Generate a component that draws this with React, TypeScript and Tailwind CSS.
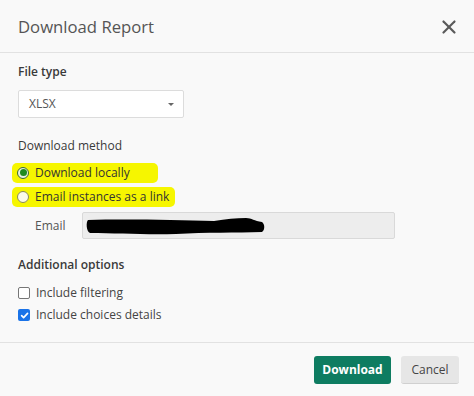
import { X } from 'lucide-react';

const font = { fontFamily: '"Open Sans", "Noto Sans", sans-serif' };

function Radio({ checked }: { checked?: boolean }) {
  return (
    <span className={`w-[12px] h-[12px] rounded-full border flex items-center justify-center shrink-0 ${checked ? 'border-[#3b6b2f] bg-[#e8f0e0]' : 'border-[#8a8a5a] bg-[#fbfbe8]'}`}>
      {checked && <span className="w-[7px] h-[7px] rounded-full bg-[#1f8a1f]" />}
    </span>
  );
}

function Checkbox({ checked }: { checked?: boolean }) {
  return checked ? (
    <span className="w-[12px] h-[12px] rounded-[2px] bg-[#1a73e8] flex items-center justify-center shrink-0">
      <svg width="9" height="9" viewBox="0 0 10 10">
        <path d="M1.8 5.2 L4 7.4 L8.4 2.6" fill="none" stroke="#fff" strokeWidth="1.8" strokeLinecap="round" strokeLinejoin="round" />
      </svg>
    </span>
  ) : (
    <span className="w-[12px] h-[12px] rounded-[2px] border border-[#767676] bg-white shrink-0" />
  );
}

export default function App() {
  return (
    <div className="w-[474px] h-[396px] bg-[#f9f9f9] flex flex-col text-[#333]" style={font}>
      {/* Header */}
      <div className="h-[53px] px-[18px] flex items-center justify-between border-b border-[#e2e2e2] pt-[2px]">
        <h1 className="text-[16.7px] text-[#555]">Download Report</h1>
        <X size={22} strokeWidth={2.4} className="text-[#5a5a5a] -mr-[4px]" />
      </div>

      {/* Body */}
      <div className="flex-1 px-[18px] pt-[10px] text-[12px]">
        <p className="h-[18px] leading-[18px] font-semibold text-[#3a3a3a]">File type</p>
        <div className="mt-[9px] w-[166px] h-[28px] bg-white border border-[#dcdcdc] rounded-[2px] flex items-center justify-between pl-[10px] pr-[9px]">
          <span className="text-[#555]">XLSX</span>
          <span className="w-0 h-0 border-l-[3px] border-r-[3px] border-t-[3px] border-l-transparent border-r-transparent border-t-[#666]" />
        </div>

        <p className="mt-[19px] h-[18px] leading-[18px] text-[#3a3a3a]">Download method</p>

        <div className="mt-[9px] flex flex-col gap-[6px]">
          <div className="h-[18px] flex">
            <span className="flex items-center gap-[6px] pl-[3px] pr-[28px] -ml-[6px] bg-[#f6f600] rounded-[5px] -my-[1px] pt-[2px] pb-[3px]">
              <span className="pl-[2px]"><Radio checked /></span>
              <span className="leading-[18px] text-[#333]">Download locally</span>
            </span>
          </div>
          <div className="h-[18px] flex">
            <span className="flex items-center gap-[6px] pl-[3px] pr-[6px] -ml-[6px] bg-[#f6f600] rounded-[5px] -my-[1px] pt-[2px] pb-[3px]">
              <span className="pl-[2px]"><Radio /></span>
              <span className="leading-[18px] text-[#333]">Email instances as a link</span>
            </span>
          </div>
        </div>

        <div className="mt-[6px] flex items-center pl-[17px]">
          <span className="w-[47px] text-[#555]">Email</span>
          <div className="w-[313px] h-[27px] bg-[#ededed] border border-[#d9d9d9] rounded-[2px] flex items-center pl-[3px]">
            <svg width="180" height="20" viewBox="0 0 180 20">
              <path d="M2 4 C40 3 90 4 128 5 C140 3 150 2 160 2 C166 2 168 5 176 6 C179 8 179 14 176 16 C150 17 120 16 90 18 C60 19 30 17 4 17 C0 15 0 6 2 4 Z" fill="#000" />
            </svg>
          </div>
        </div>

        <p className="mt-[17px] h-[18px] leading-[18px] font-semibold text-[#3a3a3a]">Additional options</p>

        <div className="mt-[10px] flex flex-col gap-[4px]">
          <label className="h-[18px] flex items-center gap-[6px]">
            <Checkbox />
            <span className="text-[#444]">Include filtering</span>
          </label>
          <label className="h-[18px] flex items-center gap-[6px]">
            <Checkbox checked />
            <span className="text-[#444]">Include choices details</span>
          </label>
        </div>
      </div>

      {/* Footer */}
      <div className="h-[54px] border-t border-[#e2e2e2] flex items-center justify-end gap-[10px] px-[15px] pt-[1px]">
        <button className="h-[28px] w-[77px] rounded-[3px] bg-[#0e7c61] text-white text-[12px] font-bold">Download</button>
        <button className="h-[28px] w-[58px] rounded-[3px] bg-[#e6e6e6] border-b border-[#d0d0d0] text-[#444] text-[12px]">Cancel</button>
      </div>
    </div>
  );
}
